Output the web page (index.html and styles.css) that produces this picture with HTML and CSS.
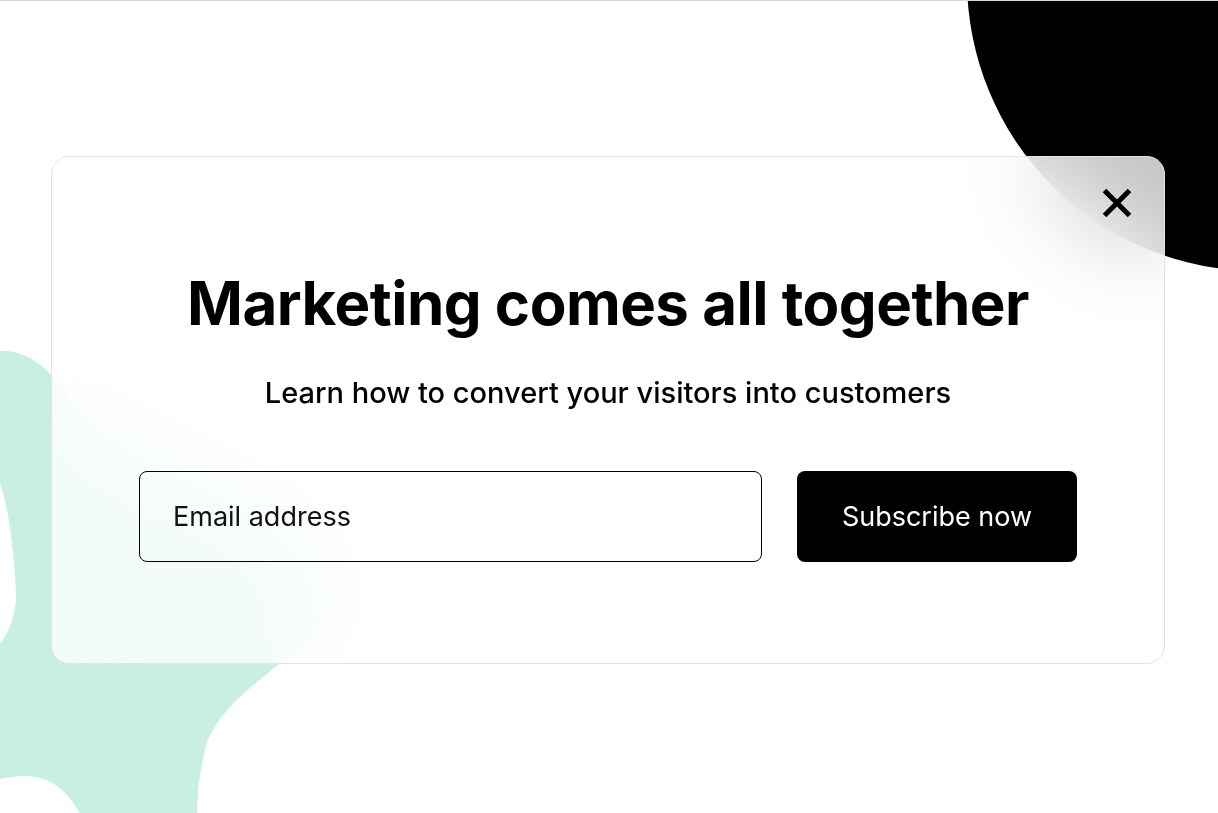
FILE: index.html
```html
<!DOCTYPE html>
<html lang="en">
<head>
<meta charset="utf-8">
<title>Marketing comes all together</title>
<link rel="stylesheet" href="styles.css">
</head>
<body>
<div class="canvas">
  <svg class="blob" width="1218" height="813" viewBox="0 0 1218 813" aria-hidden="true">
    <path d="M0 350 C30 348 55 372 75 405 C120 470 290 495 320 565 C340 620 300 650 278 664 C245 690 215 715 206 745 C200 770 197 790 197 813 L80 813 C68 790 50 775 25 775 C15 775 5 777 0 778 L0 643 C10 630 17 610 16 590 C15 560 8 500 0 483 Z" fill="#c8efdf"/>
  </svg>
  <div class="circle"></div>
</div>
<main class="page">
  <section class="card">
    <button class="close" aria-label="Close">
      <svg width="30" height="30" viewBox="0 0 30 30"><path d="M2.5 2.5 L27.5 27.5 M27.5 2.5 L2.5 27.5" stroke="#000" stroke-width="5" stroke-linecap="butt" fill="none"/></svg>
    </button>
    <h1 class="title">Marketing comes all together</h1>
    <p class="subtitle">Learn how to convert your visitors into customers</p>
    <form class="form">
      <div class="input">Email address</div>
      <button type="button" class="submit">Subscribe now</button>
    </form>
  </section>
</main>
</body>
</html>
```

FILE: styles.css
```css
* { box-sizing: border-box; }
html, body { margin: 0; padding: 0; }
body {
  width: 1218px;
  height: 813px;
  overflow: hidden;
  background: #fff;
  border-top: 1px solid #d6d6d6;
  font-family: Inter, "Noto Sans", sans-serif;
  color: #000;
  position: relative;
}
.canvas { position: absolute; inset: 0; z-index: 0; overflow: hidden; }
.blob { position: absolute; left: 0; top: 0; }
.circle {
  position: absolute;
  left: 967px;
  top: -312px;
  width: 582px;
  height: 582px;
  border-radius: 50%;
  background: #000;
}
.page {
  position: relative;
  z-index: 1;
  padding: 155px 0 0 51px;
}
.card {
  position: relative;
  width: 1114px;
  height: 508px;
  border: 1px solid #e4e4e4;
  border-radius: 18px;
  background: rgba(255,255,255,0.78);
  backdrop-filter: blur(44px);
  -webkit-backdrop-filter: blur(44px);
  display: flex;
  flex-direction: column;
  align-items: center;
  padding-top: 110px;
}
.close {
  position: absolute;
  left: 1050px;
  top: 31px;
  width: 30px;
  height: 30px;
  padding: 0;
  border: 0;
  background: none;
  display: block;
}
.close svg { display: block; }
.title {
  margin: 0;
  font-size: 60px;
  line-height: 72px;
  font-weight: 700;
  letter-spacing: -0.52px;
}
.subtitle {
  margin: 37px 0 0;
  font-size: 29px;
  line-height: 34px;
  font-weight: 500;
}
.form {
  margin: 61px 0 0;
  display: flex;
  gap: 35px;
}
.input {
  width: 623px;
  height: 91px;
  border: 1px solid #000;
  border-radius: 8px;
  display: flex;
  align-items: center;
  padding-left: 33px;
  font-size: 27px;
  color: #111;
}
.submit {
  width: 280px;
  height: 91px;
  border: 0;
  border-radius: 8px;
  background: #000;
  color: #fff;
  font-family: Inter, "Noto Sans", sans-serif;
  font-size: 27px;
  font-weight: 400;
}
```
